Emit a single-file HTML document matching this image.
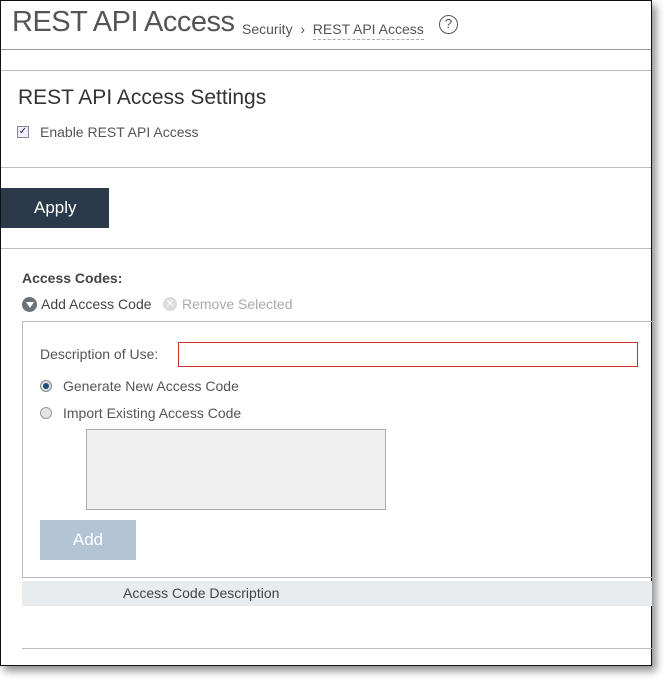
<!DOCTYPE html>
<html><head><style>
*{margin:0;padding:0;box-sizing:border-box}
body{width:668px;height:682px;background:#fff;position:relative;font-family:"Liberation Sans",sans-serif;color:#444;overflow:hidden}
.frame{position:absolute;left:0;top:0;width:652px;height:666px;border:1px solid #111;border-top:1px solid #111;box-shadow:4px 5px 8px rgba(0,0,0,.45);background:#fff}
.a{position:absolute}
</style></head><body>
<div class="frame"></div>
<div class="a" style="left:12px;top:6px;font-size:29px;color:#555;letter-spacing:-0.5px">REST API Access</div>
<div class="a" style="left:242px;top:21px;font-size:14px;color:#555">Security &nbsp;›&nbsp; <span style="border-bottom:1px dashed #aaa;padding-bottom:2px">REST API Access</span></div>
<div class="a" style="left:439px;top:15px;width:19px;height:19px;border:1.5px solid #555;border-radius:50%;font-size:13px;text-align:center;line-height:16px;color:#555">?</div>
<div class="a" style="left:1px;top:49px;width:650px;height:1px;background:#999"></div>
<div class="a" style="left:1px;top:70px;width:650px;height:1px;background:#bbb"></div>
<div class="a" style="left:18px;top:86px;font-size:21px;color:#333">REST API Access Settings</div>
<div class="a" style="left:17px;top:126px;width:12px;height:12px;border:1px solid #888;background:#eef;font-size:10px;line-height:10px;text-align:center;color:#225">✓</div>
<div class="a" style="left:40px;top:124px;font-size:14px;color:#555">Enable REST API Access</div>
<div class="a" style="left:1px;top:167px;width:650px;height:1px;background:#bbb"></div>
<div class="a" style="left:1px;top:188px;width:108px;height:40px;background:#2b3a4b;color:#fff;font-size:17px;line-height:40px;padding-left:33px">Apply</div>
<div class="a" style="left:1px;top:248px;width:650px;height:1px;background:#bbb"></div>
<div class="a" style="left:22px;top:270px;font-size:14px;font-weight:bold;color:#444">Access Codes:</div>
<div class="a" style="left:22px;top:297px;width:15px;height:15px;border-radius:50%;background:#6b7378"><div style="margin:5px auto 0;width:0;height:0;border-left:4px solid transparent;border-right:4px solid transparent;border-top:6px solid #fff"></div></div>
<div class="a" style="left:41px;top:296px;font-size:14px;color:#444">Add Access Code</div>
<div class="a" style="left:163px;top:297px;width:14px;height:14px;border-radius:50%;background:#dcdcdc;color:#fff;font-size:11px;line-height:14px;text-align:center">✕</div>
<div class="a" style="left:182px;top:296px;font-size:14px;color:#aaa">Remove Selected</div>
<div class="a" style="left:22px;top:321px;width:630px;height:257px;border:1px solid #bbb;border-right:none"></div>
<div class="a" style="left:40px;top:346px;font-size:14px;color:#555">Description of Use:</div>
<div class="a" style="left:178px;top:342px;width:460px;height:25px;border:1px solid #c33"></div>
<div class="a" style="left:40px;top:380px;width:12px;height:12px;border-radius:50%;border:1px solid #888;background:#ddd"><div style="margin:2px;width:6px;height:6px;border-radius:50%;background:#1d4e7a"></div></div>
<div class="a" style="left:63px;top:378px;font-size:14px;color:#555">Generate New Access Code</div>
<div class="a" style="left:40px;top:407px;width:12px;height:12px;border-radius:50%;border:1px solid #999;background:#e4e4e4"></div>
<div class="a" style="left:63px;top:405px;font-size:14px;color:#555">Import Existing Access Code</div>
<div class="a" style="left:86px;top:429px;width:300px;height:81px;border:1px solid #aaa;background:#f0f0f0"></div>
<div class="a" style="left:40px;top:520px;width:96px;height:40px;background:#b3c5d5;color:#fff;font-size:17px;line-height:40px;text-align:center">Add</div>
<div class="a" style="left:22px;top:581px;width:630px;height:25px;background:#e8ecef"></div>
<div class="a" style="left:123px;top:585px;font-size:14px;color:#444">Access Code Description</div>
<div class="a" style="left:22px;top:648px;width:630px;height:1px;background:#bbb"></div>
</body></html>
